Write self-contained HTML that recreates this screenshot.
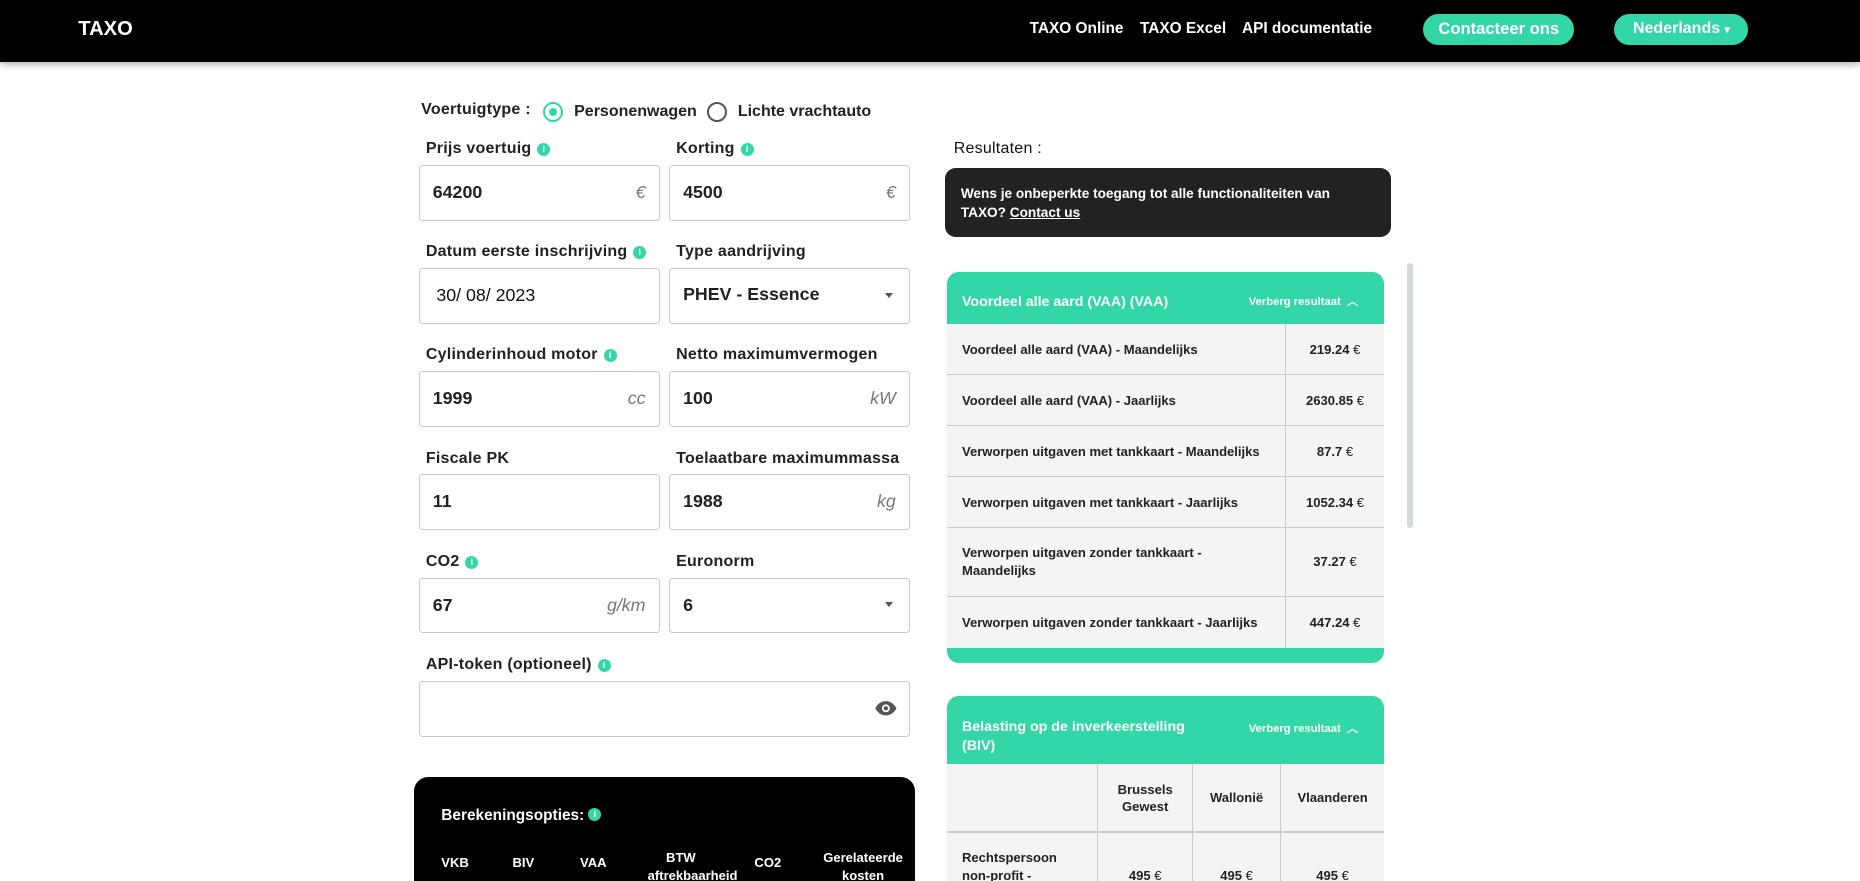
<!DOCTYPE html>
<html><head><meta charset="utf-8"><style>
*{box-sizing:border-box;margin:0;padding:0}
html,body{width:1860px;height:881px;overflow:hidden;background:#fff}
body{font-family:"Liberation Sans",sans-serif;color:#222}
#w{position:absolute;left:0;top:0;width:1568px;height:743px;zoom:1.18622;overflow:hidden}
.a{position:absolute}
.hdr{left:0;top:0;width:1568px;height:52px;background:#000;box-shadow:0 2px 6px rgba(0,0,0,.35)}
.nav{color:#fff;font-weight:bold;font-size:13px;top:17px}
.btn{background:#33d6a6;color:#fff;border-radius:14px;font-size:14px;font-weight:bold;text-align:center;line-height:26px;top:12px;height:26px}
.lbl{font-size:13.5px;font-weight:bold;color:#222;letter-spacing:.2px}
.i{display:inline-block;width:11px;height:11px;border-radius:50%;background:#33d6a6;color:#fff;font-size:8px;line-height:11px;text-align:center;vertical-align:1px;margin-left:5px;font-weight:bold}
.in{border:1px solid #c9c9c9;border-radius:3px;height:47px;font-size:15px;font-weight:bold;line-height:45px;padding-left:11px;background:#fff}
.u{position:absolute;right:11px;top:0;font-style:italic;color:#777;font-weight:normal;font-size:15px}
.car{position:absolute;right:13px;top:20px;width:0;height:0;border-left:4px solid transparent;border-right:4px solid transparent;border-top:5px solid #555}
.card{background:#f4f4f4;border-radius:10px 10px 0 0;overflow:hidden}
.gh{background:#33d6a6;color:#fff;font-weight:bold;font-size:12px;position:relative}
.vr{position:absolute;right:22px;font-size:9.5px;font-weight:bold}
.row{position:relative;border-bottom:1px solid #c9c9c9;font-size:11px;font-weight:bold;color:#222}
.row .l{position:absolute;left:13px}
.row .v{position:absolute;left:285px;width:84px;text-align:center;border-left:1px solid #c9c9c9;top:0;bottom:0}
.cc{font-size:11px;font-weight:bold;color:#fff;text-align:center;top:716px}
</style></head><body><div id="w">
<div class="a hdr"></div>
<div class="a" style="left:66px;top:15px;color:#fff;font-weight:bold;font-size:17px">TAXO</div>
<div class="a nav" style="left:868px">TAXO Online</div>
<div class="a nav" style="left:961px">TAXO Excel</div>
<div class="a nav" style="left:1047px">API documentatie</div>
<div class="a btn" style="left:1200px;width:127px">Contacteer ons</div>
<div class="a btn" style="left:1361px;width:113px;font-size:13.5px">Nederlands <span style="font-size:9px">▾</span></div>

<div class="a lbl" style="left:355px;top:85px">Voertuigtype :</div>
<div class="a" style="left:458px;top:86px;width:17px;height:17px;border:2px solid #33d6a6;border-radius:50%"><div style="margin:3px;width:7px;height:7px;border-radius:50%;background:#33d6a6"></div></div>
<div class="a" style="left:484px;top:87px;font-size:13.5px;font-weight:bold">Personenwagen</div>
<div class="a" style="left:596px;top:86px;width:17px;height:17px;border:2px solid #555;border-radius:50%"></div>
<div class="a" style="left:622px;top:87px;font-size:13.5px;font-weight:bold">Lichte vrachtauto</div>

<div class="a lbl" style="left:359px;top:118px">Prijs voertuig<span class="i">i</span></div>
<div class="a lbl" style="left:570px;top:118px">Korting<span class="i">i</span></div>
<div class="a in" style="left:353px;top:139px;width:203px">64200<span class="u">€</span></div>
<div class="a in" style="left:564px;top:139px;width:203px">4500<span class="u">€</span></div>

<div class="a lbl" style="left:359px;top:205px">Datum eerste inschrijving<span class="i">i</span></div>
<div class="a lbl" style="left:570px;top:205px">Type aandrijving</div>
<div class="a in" style="left:353px;top:226px;width:203px;padding-left:14px;font-weight:normal;color:#111">30/ 08/ 2023</div>
<div class="a in" style="left:564px;top:226px;width:203px;line-height:43px">PHEV - Essence<span class="car"></span></div>

<div class="a lbl" style="left:359px;top:292px">Cylinderinhoud motor<span class="i">i</span></div>
<div class="a lbl" style="left:570px;top:292px">Netto maximumvermogen</div>
<div class="a in" style="left:353px;top:313px;width:203px">1999<span class="u">cc</span></div>
<div class="a in" style="left:564px;top:313px;width:203px">100<span class="u">kW</span></div>

<div class="a lbl" style="left:359px;top:379px">Fiscale PK</div>
<div class="a lbl" style="left:570px;top:379px">Toelaatbare maximummassa</div>
<div class="a in" style="left:353px;top:400px;width:203px">11</div>
<div class="a in" style="left:564px;top:400px;width:203px">1988<span class="u">kg</span></div>

<div class="a lbl" style="left:359px;top:466px">CO2<span class="i">i</span></div>
<div class="a lbl" style="left:570px;top:466px">Euronorm</div>
<div class="a in" style="left:353px;top:487px;width:203px">67<span class="u">g/km</span></div>
<div class="a in" style="left:564px;top:487px;width:203px">6<span class="car"></span></div>

<div class="a lbl" style="left:359px;top:553px">API-token (optioneel)<span class="i">i</span></div>
<div class="a in" style="left:353px;top:574px;width:414px">
<svg style="position:absolute;right:9px;top:15px" width="20" height="14" viewBox="0 0 20 14"><path d="M1 7C4 2 7 1 10 1s6 1 9 6c-3 5-6 6-9 6S4 12 1 7z" fill="#555"/><circle cx="10" cy="7" r="3.3" fill="#fff"/><circle cx="10" cy="7" r="1.8" fill="#555"/></svg></div>

<div class="a" style="left:349px;top:655px;width:422px;height:88px;background:#000;border-radius:12px 12px 0 0;overflow:hidden">
<div class="a" style="left:23px;top:25px;color:#fff;font-weight:bold;font-size:13px">Berekeningsopties:</div>
<div class="a" style="left:147px;top:21px"><span class="i" style="margin:0">i</span></div>
<div class="a cc" style="left:23px;top:66px">VKB</div>
<div class="a cc" style="left:83px;top:66px">BIV</div>
<div class="a cc" style="left:140px;top:66px">VAA</div>
<div class="a cc" style="left:197px;width:56px;top:61px;line-height:15px">BTW<br>aftrekbaarheid</div>
<div class="a cc" style="left:287px;top:66px">CO2</div>
<div class="a cc" style="left:345px;top:61px;line-height:15px">Gerelateerde<br>kosten</div>
</div>

<div class="a lbl" style="left:804px;top:118px;font-weight:normal;font-size:13.5px;color:#111">Resultaten :</div>
<div class="a" style="left:797px;top:142px;width:376px;height:58px;background:#222;border-radius:9px;color:#fff;font-size:11.5px;font-weight:bold;padding:14px 13px;line-height:16px">Wens je onbeperkte toegang tot alle functionaliteiten van TAXO? <u>Contact us</u></div>

<div class="a card" style="left:798px;top:229px;width:369px;height:330px;border-radius:10px">
<div class="gh" style="height:44px;line-height:52px;padding-left:13px">Voordeel alle aard (VAA) (VAA)<span class="vr">Verberg resultaat &nbsp;︿</span></div>
<div class="row" style="height:43px;line-height:43px"><span class="l">Voordeel alle aard (VAA) - Maandelijks</span><span class="v">219.24 <span style="font-weight:normal">€</span></span></div>
<div class="row" style="height:43px;line-height:43px"><span class="l">Voordeel alle aard (VAA) - Jaarlijks</span><span class="v">2630.85 <span style="font-weight:normal">€</span></span></div>
<div class="row" style="height:43px;line-height:43px"><span class="l">Verworpen uitgaven met tankkaart - Maandelijks</span><span class="v">87.7 <span style="font-weight:normal">€</span></span></div>
<div class="row" style="height:43px;line-height:43px"><span class="l">Verworpen uitgaven met tankkaart - Jaarlijks</span><span class="v">1052.34 <span style="font-weight:normal">€</span></span></div>
<div class="row" style="height:58px"><span class="l" style="top:14px;line-height:15px">Verworpen uitgaven zonder tankkaart -<br>Maandelijks</span><span class="v" style="line-height:58px">37.27 <span style="font-weight:normal">€</span></span></div>
<div class="row" style="height:43px;line-height:43px;border:0"><span class="l">Verworpen uitgaven zonder tankkaart - Jaarlijks</span><span class="v">447.24 <span style="font-weight:normal">€</span></span></div>
<div style="height:13px;background:#33d6a6"></div>
</div>
<div class="a" style="left:1186px;top:222px;width:5px;height:223px;background:#d3dadd;border-radius:3px"></div>

<div class="a card" style="left:798px;top:587px;width:369px;height:156px">
<div class="gh" style="height:57px;padding:18px 0 0 13px;line-height:16px">Belasting op de inverkeerstelling<br>(BIV)<span class="vr" style="top:20px">Verberg resultaat &nbsp;︿</span></div>
<div class="row" style="height:58px;border-bottom:2px solid #c9c9c9">
<div class="a" style="left:127px;top:0;bottom:0;width:80px;border-left:1px solid #c9c9c9;text-align:center;padding-top:14px;line-height:15px">Brussels<br>Gewest</div>
<div class="a" style="left:207px;top:0;bottom:0;width:74px;border-left:1px solid #c9c9c9;text-align:center;line-height:58px">Wallonië</div>
<div class="a" style="left:281px;top:0;bottom:0;width:88px;border-left:1px solid #c9c9c9;text-align:center;line-height:58px">Vlaanderen</div></div>
<div class="row" style="height:41px;border:0">
<span class="l" style="top:14px;line-height:15px">Rechtspersoon<br>non-profit -</span>
<div class="a" style="left:127px;top:0;height:80px;width:80px;border-left:1px solid #c9c9c9;text-align:center;padding-top:30px">495 <span style="font-weight:normal">€</span></div>
<div class="a" style="left:207px;top:0;height:80px;width:74px;border-left:1px solid #c9c9c9;text-align:center;padding-top:30px">495 <span style="font-weight:normal">€</span></div>
<div class="a" style="left:281px;top:0;height:80px;width:88px;border-left:1px solid #c9c9c9;text-align:center;padding-top:30px">495 <span style="font-weight:normal">€</span></div></div>
</div>
</div></body></html>
